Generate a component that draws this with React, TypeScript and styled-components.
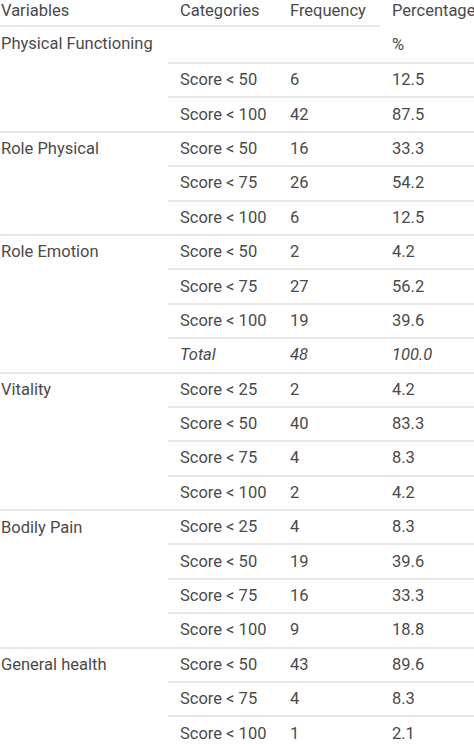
import styled, { createGlobalStyle } from "styled-components";

const Global = createGlobalStyle`
    html, body {
        margin: 0;
        padding: 0;
        background: #fff;
        overflow: hidden;
    }
    body {
        font-family: Roboto, "Liberation Sans", sans-serif;
        color: #4a4a4a;
        font-size: 16.5px;
    }
`;

const Table = styled.div`
    width: 474px;
`;
const HeaderRow = styled.div`
    display: grid;
    grid-template-columns: 168px 110px 102px 1fr;
    height: 27px;
`;
const HeadCell = styled.div<{ $line?: boolean; $pad?: number }>`
    box-sizing: border-box;
    padding-left: ${props => props.$pad ?? 12}px;
    padding-top: 1px;
    border-bottom: ${props => (props.$line ? "2px solid #e8e8e8" : "none")};
    white-space: nowrap;
`;
const Group = styled.div<{ $first?: boolean }>`
    display: flex;
    border-top: ${props => (props.$first ? "none" : "2px solid #e8e8e8")};
`;
const Label = styled.div`
    width: 168px;
    flex: none;
    height: 32px;
    display: flex;
    align-items: center;
    padding-left: 1px;
    box-sizing: border-box;
    white-space: nowrap;
`;
const SubRows = styled.div`
    flex: 1;
`;
const SubRow = styled.div<{ $first?: boolean; $tall?: boolean }>`
    display: grid;
    grid-template-columns: 110px 102px 1fr;
    height: ${props => (props.$first ? (props.$tall ? "35px" : "32.4px") : "34.4px")};
    box-sizing: border-box;
    border-top: ${props => (props.$first ? "none" : "2px solid #e8e8e8")};
    align-items: center;
`;
const Cell = styled.div<{ $italic?: boolean }>`
    padding-left: 12px;
    padding-bottom: 1px;
    white-space: nowrap;
    font-style: ${props => (props.$italic ? "italic" : "normal")};
`;

type Row = { cat: string; freq: string; pct: string; italic?: boolean };
type GroupData = { label: string; rows: Row[] };

const s = (cat: string, freq: string, pct: string): Row => ({ cat: `Score < ${cat}`, freq, pct });

const groups: GroupData[] = [
    { label: "Physical Functioning", rows: [{ cat: "", freq: "", pct: "%" }, s("50", "6", "12.5"), s("100", "42", "87.5")] },
    { label: "Role Physical", rows: [s("50", "16", "33.3"), s("75", "26", "54.2"), s("100", "6", "12.5")] },
    { label: "Role Emotion", rows: [s("50", "2", "4.2"), s("75", "27", "56.2"), s("100", "19", "39.6"), { cat: "Total", freq: "48", pct: "100.0", italic: true }] },
    { label: "Vitality", rows: [s("25", "2", "4.2"), s("50", "40", "83.3"), s("75", "4", "8.3"), s("100", "2", "4.2")] },
    { label: "Bodily Pain", rows: [s("25", "4", "8.3"), s("50", "19", "39.6"), s("75", "16", "33.3"), s("100", "9", "18.8")] },
    { label: "General health", rows: [s("50", "43", "89.6"), s("75", "4", "8.3"), s("100", "1", "2.1")] },
];

function App() {
    return (<>
        <Global />
        <Table>
            <HeaderRow>
                <HeadCell $line $pad={1}>Variables</HeadCell>
                <HeadCell $line>Categories</HeadCell>
                <HeadCell $line>Frequency</HeadCell>
                <HeadCell>Percentage</HeadCell>
            </HeaderRow>
            {groups.map((g, gi) => (
                <Group key={g.label} $first={gi === 0}>
                    <Label>{g.label}</Label>
                    <SubRows>
                        {g.rows.map((r, ri) => (
                            <SubRow key={ri} $first={ri === 0} $tall={gi === 0}>
                                <Cell $italic={r.italic}>{r.cat}</Cell>
                                <Cell $italic={r.italic}>{r.freq}</Cell>
                                <Cell $italic={r.italic}>{r.pct}</Cell>
                            </SubRow>
                        ))}
                    </SubRows>
                </Group>
            ))}
        </Table>
    </>);
}

export default App;
